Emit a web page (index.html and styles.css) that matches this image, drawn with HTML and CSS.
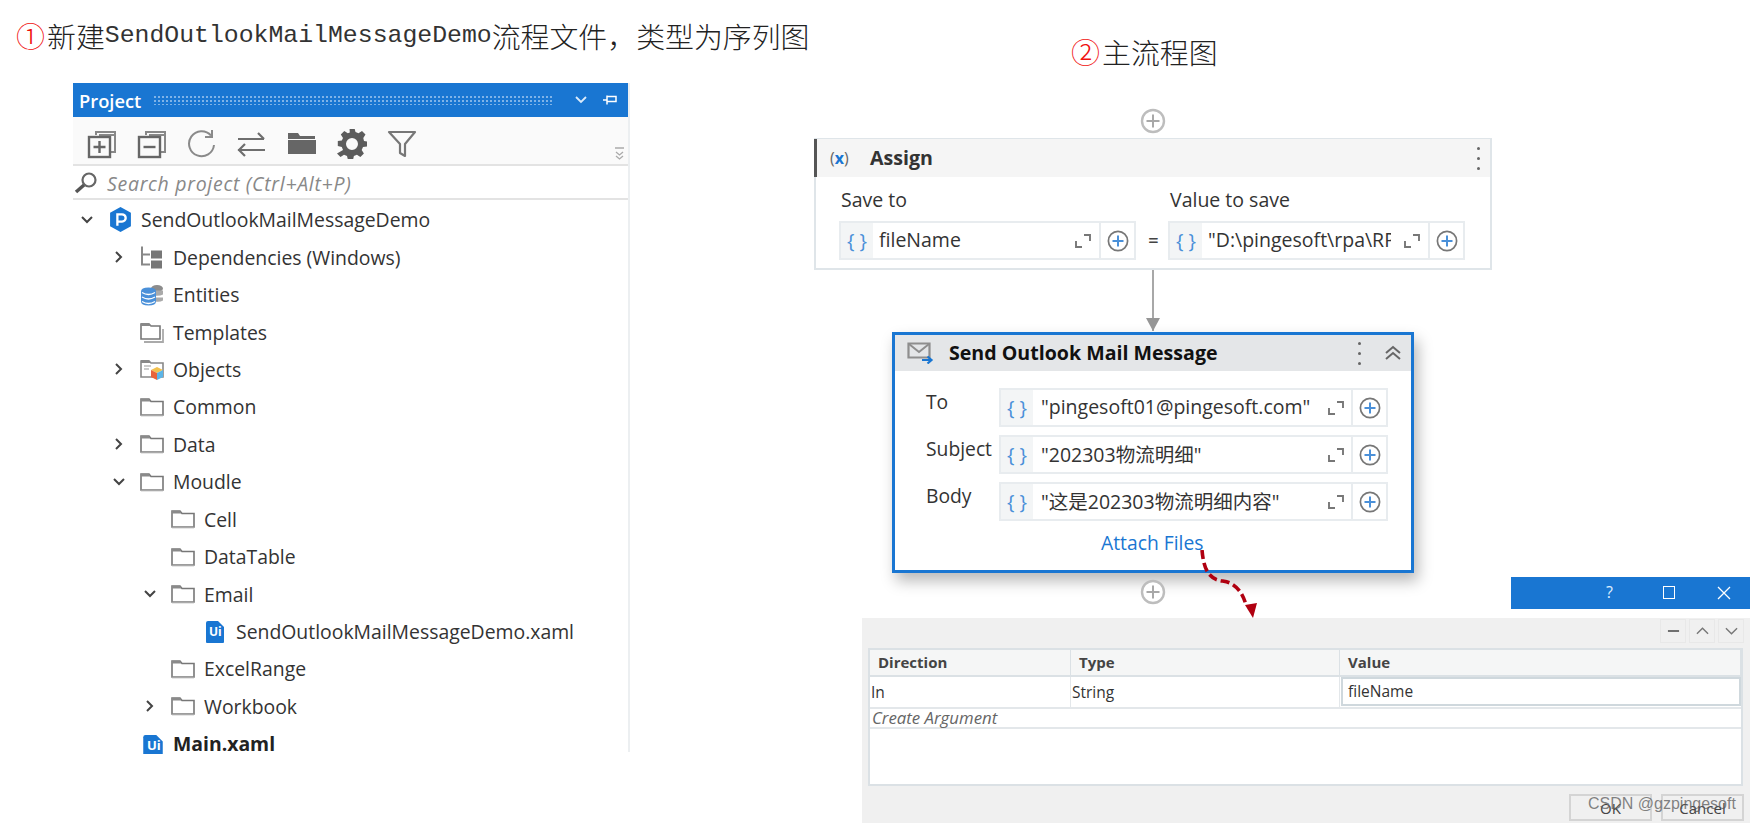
FILE: index.html
```html
<!DOCTYPE html>
<html lang="zh-CN">
<head>
<meta charset="utf-8">
<title>SendOutlookMailMessageDemo</title>
<link rel="stylesheet" href="styles.css">
</head>
<body>
<svg class="sprite" aria-hidden="true">
  <symbol id="folder" viewBox="0 0 24 20"><path d="M1 18V2h8l2 2.5h12V18z" fill="#fff" stroke="#777" stroke-width="1.6"/><path d="M1 2h8l2 2.5H1z" fill="#8a8a8a"/><path d="M1 18.5h22" stroke="#aaa" stroke-width="1.6"/></symbol>
  <symbol id="expand" viewBox="0 0 18 16"><path d="M2 8v6h6M10 2h6v6" fill="none" stroke="#777" stroke-width="1.9"/></symbol>
  <symbol id="plus" viewBox="0 0 22 22"><circle cx="11" cy="11" r="9.6" fill="#fff" stroke="#777" stroke-width="1.7"/><path d="M11 5.5v11M5.5 11h11" stroke="#4a90d9" stroke-width="2"/></symbol>
  <symbol id="addstep" viewBox="0 0 26 26"><circle cx="13" cy="13" r="11" fill="#fff" stroke="#bdbdbd" stroke-width="2.4"/><path d="M13 6.5v13M6.5 13h13" stroke="#a8a8a8" stroke-width="2"/></symbol>
  <symbol id="ui" viewBox="0 0 20 24"><path d="M1 3q0-2 2-2h10l6 6v15q0 1-1 1H2q-1 0-1-1z" fill="#1976d2"/></symbol>
</svg>

<h1 class="caption caption-one"><span class="mark">①</span><span class="zh">新建</span><span class="mono">SendOutlookMailMessageDemo</span><span class="zh">流程文件&#xFF0C;类型为序列图</span></h1>
<h2 class="caption caption-two"><span class="mark">②</span><span class="zh">主流程图</span></h2>

<section class="project">
  <header class="project-title">
    <span class="project-name">Project</span>
    <span class="grip"></span>
    <svg class="title-icon" viewBox="0 0 14 10"><path d="M2 2l5 5 5-5" fill="none" stroke="#dcebfa" stroke-width="1.8"/></svg>
    <svg class="title-icon" viewBox="0 0 16 12"><path d="M1 6h4M5 1.5v9M5 2.5h9v5H5" fill="none" stroke="#fff" stroke-width="1.5"/></svg>
  </header>
  <div class="toolbar">
    <svg class="tool" viewBox="0 0 30 30"><path d="M9 6V3h19v20h-4M13 7V6h14" fill="none" stroke="#888" stroke-width="2"/><rect x="2" y="8" width="21" height="20" fill="none" stroke="#666" stroke-width="2.4"/><path d="M12.500 12v12M6.500 18h12" stroke="#666" stroke-width="2.4"/></svg>
    <svg class="tool" viewBox="0 0 30 30"><path d="M9 6V3h19v20h-4M13 7V6h14" fill="none" stroke="#888" stroke-width="2"/><rect x="2" y="8" width="21" height="20" fill="none" stroke="#666" stroke-width="2.400"/><path d="M6.500 18h12" stroke="#666" stroke-width="2.400"/></svg>
    <svg class="tool" viewBox="0 0 30 30"><path d="M24 6.500A12.500 12.500 0 1 0 27 16" fill="none" stroke="#8a8a8a" stroke-width="2"/><path d="M25 1v7h-7" fill="none" stroke="#8a8a8a" stroke-width="2"/></svg>
    <svg class="tool" viewBox="0 0 30 30"><path d="M1 10h26M21 4l6 6M1 21h27M8 15l-6 6 6 6" fill="none" stroke="#6e6e6e" stroke-width="2.200"/></svg>
    <svg class="tool" viewBox="0 0 30 30"><path d="M1 4h10l2 3h15v3H1z" fill="#666"/><path d="M1 11h28v14H1z" fill="#666"/></svg>
    <svg class="tool" viewBox="0 0 30 30"><path fill="#5c5c5c" fill-rule="evenodd" d="M12.500 1h5l1 4 3 1.300 3.500-2.200 3.500 3.500-2.200 3.500L27 14l3 .5v5l-4 .5-1.300 3 2.200 3.500-3.500 3.500-3.500-2.200-3 1.200-.9 4h-5l-1-4-3-1.200-3.500 2.200-3.500-3.500L6 23l-1.200-3-4-.9v-5l4-.6L6 11 3.800 7.600l3.500-3.500L10.800 6.300l2-.9zM15 11a6 6 0 1 0 0 12 6 6 0 0 0 0-12z" transform="translate(0 -2)"/></svg>
    <svg class="tool" viewBox="0 0 30 30"><path d="M2 3h26L18 15v12l-5-3v-9z" fill="none" stroke="#777" stroke-width="2.200" stroke-linejoin="round"/></svg>
    <svg class="overflow" viewBox="0 0 12 14"><path d="M1 2h9M2 6l3.500 3L9 6M2 10l3.500 3L9 10" fill="none" stroke="#aaa" stroke-width="1.300"/></svg>
  </div>
  <div class="search">
    <svg class="search-icon" viewBox="0 0 24 22"><circle cx="15" cy="8" r="6.500" fill="none" stroke="#666" stroke-width="2.200"/><path d="M10 13l-8 7" stroke="#555" stroke-width="3.500"/></svg>
    <span>Search project (Ctrl+Alt+P)</span>
  </div>
  <ul class="tree">
    <li class="row l1"><svg class="chev" viewBox="0 0 14 14"><path d="M2 4l5 5 5-5"/></svg><svg class="ico-logo" viewBox="0 0 22 24"><path d="M11 0l10 5.500v13L11 24 1 18.500v-13z" fill="#1976d2"/><path d="M8 18V7h4.500a3.300 3.300 0 0 1 0 7H8" fill="none" stroke="#fff" stroke-width="2.200"/></svg><span>SendOutlookMailMessageDemo</span></li>
    <li class="row l2"><svg class="chev" viewBox="0 0 14 14"><path d="M4 2l5 5-5 5"/></svg><svg class="ico ico-tall" viewBox="0 0 24 24"><path d="M2 1v18h8M2 9h8" fill="none" stroke="#888" stroke-width="2"/><rect x="11" y="5" width="11" height="8" fill="#777"/><rect x="11" y="15" width="11" height="8" fill="#777"/></svg><span>Dependencies (Windows)</span></li>
    <li class="row l2 nochev"><svg class="ico ico-tall" viewBox="0 0 24 24"><ellipse cx="17" cy="6" rx="6" ry="3.500" fill="#8c8c8c"/><path d="M12 8h11v4q-3 2-11 1zM15 15h8v3q-3 2-8 1z" fill="#aaa"/><path d="M1 9q0-4 7.500-4T16 9v10q0 4-7.500 4T1 19z" fill="#4a90d9"/><path d="M2 10q6.500 4 13 0M2 14.500q6.500 4 13 0M2 19q6.500 4 13 0" fill="none" stroke="#fff" stroke-width="1.300"/></svg><span>Entities</span></li>
    <li class="row l2 nochev"><svg class="ico" viewBox="0 0 24 22"><path d="M1 3h8l2 2h9v13H1z" fill="#fff" stroke="#777" stroke-width="1.600"/><path d="M1 2h8l2 3H1z" fill="#888"/><path d="M4 21h19V8" fill="none" stroke="#aaa" stroke-width="1.800"/></svg><span>Templates</span></li>
    <li class="row l2"><svg class="chev" viewBox="0 0 14 14"><path d="M4 2l5 5-5 5"/></svg><svg class="ico" viewBox="0 0 24 22"><path d="M1 3h8l2 2h12v14H1z" fill="#fff" stroke="#888" stroke-width="1.600"/><path d="M1 2h8l2 3H1z" fill="#888"/><path d="M4 8h7M4 11h5" stroke="#bbb" stroke-width="1.500"/><path d="M17 9l6 3-6 3-6-3z" fill="#f2c14e"/><path d="M11 12l6 3v7l-6-3z" fill="#e8643c"/><path d="M23 12l-6 3v7l6-3z" fill="#5bb5e8"/></svg><span>Objects</span></li>
    <li class="row l2 nochev"><svg class="ico"><use href="#folder"/></svg><span>Common</span></li>
    <li class="row l2"><svg class="chev" viewBox="0 0 14 14"><path d="M4 2l5 5-5 5"/></svg><svg class="ico"><use href="#folder"/></svg><span>Data</span></li>
    <li class="row l2"><svg class="chev" viewBox="0 0 14 14"><path d="M2 4l5 5 5-5"/></svg><svg class="ico"><use href="#folder"/></svg><span>Moudle</span></li>
    <li class="row l3 nochev"><svg class="ico"><use href="#folder"/></svg><span>Cell</span></li>
    <li class="row l3 nochev"><svg class="ico"><use href="#folder"/></svg><span>DataTable</span></li>
    <li class="row l3"><svg class="chev" viewBox="0 0 14 14"><path d="M2 4l5 5 5-5"/></svg><svg class="ico"><use href="#folder"/></svg><span>Email</span></li>
    <li class="row l4 nochev"><span class="ui-file"><svg class="ui-bg"><use href="#ui"/></svg><i>Ui</i></span><span>SendOutlookMailMessageDemo.xaml</span></li>
    <li class="row l3 nochev"><svg class="ico"><use href="#folder"/></svg><span>ExcelRange</span></li>
    <li class="row l3"><svg class="chev" viewBox="0 0 14 14"><path d="M4 2l5 5-5 5"/></svg><svg class="ico"><use href="#folder"/></svg><span>Workbook</span></li>
    <li class="row l2 nochev main"><span class="ui-file"><svg class="ui-bg"><use href="#ui"/></svg><i>Ui</i></span><span>Main.xaml</span></li>
  </ul>
</section>

<main class="flow">
  <svg class="addstep"><use href="#addstep"/></svg>
  <article class="assign">
    <header class="assign-head">
      <span class="x-icon">(<b>x</b>)</span>
      <span class="assign-title">Assign</span>
      <span class="kebab"><i></i><i></i><i></i></span>
    </header>
    <div class="assign-body">
      <div class="assign-col">
        <label>Save to</label>
        <div class="field f-left"><span class="brace">{ }</span><span class="val">fileName</span><svg class="exp"><use href="#expand"/></svg><span class="add"><svg><use href="#plus"/></svg></span></div>
      </div>
      <span class="equals">=</span>
      <div class="assign-col">
        <label>Value to save</label>
        <div class="field f-right"><span class="brace">{ }</span><span class="val">"D:\pingesoft\rpa\RPA</span><svg class="exp"><use href="#expand"/></svg><span class="add"><svg><use href="#plus"/></svg></span></div>
      </div>
    </div>
  </article>
  <div class="connector"></div>
  <article class="send">
    <header class="send-head">
      <svg class="mail" viewBox="0 0 27 22"><path d="M1.500 1.500h21v14h-21z" fill="none" stroke="#8e8e8e" stroke-width="2.200"/><path d="M2 2l10 8 10-8" fill="none" stroke="#8e8e8e" stroke-width="2"/><path d="M15 18h9M20.500 14.500l4 3.500-4 3.500" fill="none" stroke="#1976d2" stroke-width="2.200"/></svg>
      <span class="send-title">Send Outlook Mail Message</span>
      <span class="kebab"><i></i><i></i><i></i></span>
      <svg class="collapse" viewBox="0 0 16 16"><path d="M1 8l7-6 7 6M1 14l7-6 7 6" fill="none" stroke="#666" stroke-width="2"/></svg>
    </header>
    <div class="send-body">
      <div class="send-row"><label>To</label><div class="field"><span class="brace">{ }</span><span class="val">"pingesoft01@pingesoft.com"</span><svg class="exp"><use href="#expand"/></svg><span class="add"><svg><use href="#plus"/></svg></span></div></div>
      <div class="send-row"><label>Subject</label><div class="field"><span class="brace">{ }</span><span class="val">"202303物流明细"</span><svg class="exp"><use href="#expand"/></svg><span class="add"><svg><use href="#plus"/></svg></span></div></div>
      <div class="send-row"><label>Body</label><div class="field"><span class="brace">{ }</span><span class="val">"这是202303物流明细内容"</span><svg class="exp"><use href="#expand"/></svg><span class="add"><svg><use href="#plus"/></svg></span></div></div>
      <a class="attach">Attach Files</a>
    </div>
  </article>
  <svg class="addstep addstep-low"><use href="#addstep"/></svg>
</main>

<div class="dialog-bar">
  <span class="bar-q">?</span>
  <span class="bar-max"></span>
  <svg class="bar-x" viewBox="0 0 14 14"><path d="M1 1l12 12M13 1L1 13" stroke="#fff" stroke-width="1.300"/></svg>
</div>
<section class="dialog">
  <div class="dialog-tools">
    <span class="tbtn"><svg viewBox="0 0 14 10"><path d="M1 5h12" stroke="#666" stroke-width="2"/></svg></span>
    <span class="tbtn"><svg viewBox="0 0 14 10"><path d="M1 8l6-6 6 6" fill="none" stroke="#777" stroke-width="1.500"/></svg></span>
    <span class="tbtn"><svg viewBox="0 0 14 10"><path d="M1 2l6 6 6-6" fill="none" stroke="#777" stroke-width="1.500"/></svg></span>
  </div>
  <div class="grid">
    <div class="grid-head"><span>Direction</span><span>Type</span><span>Value</span></div>
    <div class="grid-row"><span>In</span><span>String</span><span class="cell-edit">fileName</span></div>
    <div class="grid-create">Create Argument</div>
    <div class="grid-empty"></div>
  </div>
  <div class="dialog-actions"><button>OK</button><button>Cancel</button></div>
</section>

<svg class="red-arrow" viewBox="0 0 60 70"><path d="M2 0c1 11 3 20 8 25 6 7 13 5 20 8 8 4 13 11 16 22" fill="none" stroke="#b00010" stroke-width="3.600" stroke-dasharray="9 4"/><path d="M45 55l12-2-4 15z" fill="#b00010"/></svg>
<span class="watermark">CSDN @gzpingesoft</span>
</body>
</html>
```

FILE: styles.css
```css
* { box-sizing: border-box; }
html, body { margin: 0; padding: 0; }
body {
  position: relative;
  width: 1750px;
  height: 823px;
  overflow: hidden;
  background: #fff;
  font-family: "Open Sans", "Noto Sans CJK SC", sans-serif;
  color: #333;
}
.sprite { position: absolute; width: 0; height: 0; }

/* captions */
.caption {
  position: absolute;
  margin: 0;
  font-weight: 400;
  display: flex;
  align-items: center;
  height: 36px;
  color: #222;
  white-space: nowrap;
}
.caption-one { left: 16px; top: 17px; }
.caption-two { left: 1071px; top: 33px; }
.mark { font: 300 29px "Noto Sans CJK SC", sans-serif; color: #f01010; width: 31px; }
.zh { font: 300 28.9px "Noto Sans CJK SC", sans-serif; }
.mono { font: 400 24.8px "Liberation Mono", monospace; color: #333; }

/* project panel */
.project {
  position: absolute;
  left: 73px;
  top: 83px;
  width: 557px;
  height: 669px;
  border-right: 2px solid #eceff1;
}
.project-title {
  height: 34px;
  background: #1976d2;
  display: flex;
  align-items: center;
  padding: 0 10px 0 6px;
  color: #fff;
}
.project-name { font-size: 18.3px; font-weight: 600; }
.grip {
  flex: 1;
  height: 10px;
  margin: 0 12px 0 12px;
  background-image: radial-gradient(circle, #7fb3e8 1px, transparent 1.2px);
  background-size: 4px 4px;
}
.title-icon { width: 14px; height: 12px; margin-left: 8px; }
.title-icon:last-child { width: 16px; margin-left: 14px; }
.toolbar {
  position: relative;
  height: 49px;
  display: flex;
  align-items: center;
  gap: 20px;
  padding: 7px 0 0 14px;
  background: #fafafa;
  border-bottom: 2px solid #e3e3e3;
}
.tool { width: 30px; height: 30px; }
.overflow { position: absolute; right: 2px; bottom: 4px; width: 12px; height: 14px; }
.search {
  height: 34px;
  display: flex;
  align-items: center;
  gap: 9px;
  padding-top: 2px;
  border-bottom: 2px solid #e3e3e3;
  font-style: italic;
  font-size: 19.5px;
  letter-spacing: .7px;
  color: #888;
  white-space: nowrap;
}
.search-icon { width: 24px; height: 22px; margin-left: 1px; }
.tree { list-style: none; margin: 0; padding: 1px 0 0; }
.row {
  display: flex;
  align-items: center;
  height: 37.45px;
  font-size: 19.4px;
  color: #333;
  white-space: nowrap;
}
.l1 { padding-left: 7px; }
.l2 { padding-left: 40px; }
.l3 { padding-left: 71px; }
.l4 { padding-left: 132px; }
.chev { width: 14px; height: 14px; margin-right: 14px; margin-left: -1px; fill: none; stroke: #444; stroke-width: 2; flex: none; }
.nochev::before { content: ""; width: 27px; flex: none; }
.l4.nochev::before { width: 0; }
.l1 .chev { margin: 0 15px 0 0; }
.ico { width: 24px; height: 22px; margin-right: 9px; flex: none; }
.ico-tall { height: 25px; }
.ico-logo { width: 23px; height: 25px; margin-right: 9px; flex: none; }
.ui-file { position: relative; width: 20px; height: 24px; margin-right: 11px; flex: none; }
.ui-bg { width: 20px; height: 24px; display: block; }
.ui-file i {
  position: absolute;
  left: 4px;
  top: 5px;
  font: 700 12px/14px "Open Sans", sans-serif;
  color: #fff;
}
.row.main { height: 20px; margin-top: 9px; line-height: 20px; font-weight: 700; color: #222; }
.main.nochev::before { width: 29px; }
.main .ui-file { width: 22px; height: 20px; margin-right: 9px; overflow: hidden; }
.main .ui-bg { width: 22px; height: 26px; }
.main .ui-file i { left: 5px; top: 4px; font-size: 13px; }

/* flowchart */
.flow {
  position: absolute;
  left: 814px;
  top: 108px;
  width: 678px;
  display: flex;
  flex-direction: column;
  align-items: center;
}
.addstep { width: 26px; height: 26px; flex: none; }
.assign {
  width: 678px;
  height: 132px;
  margin-top: 4px;
  border: 2px solid #dfe5e9;
  border-top-width: 1px;
}
.assign-head {
  height: 38px;
  margin-left: -2px;
  padding: 0 10px 0 13px;
  display: flex;
  align-items: center;
  background: #f5f5f5;
  border-left: 3px solid #555;
}
.x-icon { width: 30px; font-size: 16px; color: #666; }
.x-icon b { color: #1976d2; }
.assign-title { margin-left: 10px; padding-bottom: 2px; flex: 1; font-size: 19.6px; font-weight: 700; color: #333; }
.kebab { display: flex; flex-direction: column; gap: 7px; width: 3px; }
.kebab i { width: 3px; height: 3px; background: #666; border-radius: 50%; }
.assign-body { display: flex; align-items: flex-end; padding: 0 25px 0 23px; }
.assign-col label { display: block; height: 44px; padding: 9px 0 0 2px; font-size: 19.5px; color: #333; }
.equals { width: 32px; height: 38px; padding-left: 3px; line-height: 36px; text-align: center; font-size: 18px; font-weight: 600; color: #444; }
.field {
  display: flex;
  align-items: center;
  height: 39px;
  border: 2px solid #e8ecef;
  background: #fff;
  font-size: 19.5px;
  color: #333;
  white-space: nowrap;
}
.f-left { width: 297px; }
.f-right { width: 297px; }
.brace {
  width: 32px;
  height: 100%;
  flex: none;
  display: flex;
  align-items: center;
  justify-content: center;
  background: #f3f5f6;
  color: #4a90d9;
  font-size: 20px;
}
.val { flex: 1; min-width: 0; overflow: hidden; margin: 0 12px 0 6px; padding-bottom: 2px; }
.exp { width: 18px; height: 16px; flex: none; margin-right: 7px; }
.add {
  width: 35px;
  height: 100%;
  flex: none;
  display: flex;
  align-items: center;
  justify-content: center;
  border-left: 2px solid #e8ecef;
}
.add svg { width: 22px; height: 22px; }
.connector {
  position: relative;
  width: 2px;
  height: 61px;
  background: #a8a8a8;
}
.connector::after {
  content: "";
  position: absolute;
  left: -6px;
  bottom: 0;
  border-left: 7px solid transparent;
  border-right: 7px solid transparent;
  border-top: 13px solid #969696;
}
.send {
  width: 522px;
  height: 241px;
  margin-top: 1px;
  border: 3px solid #1976d2;
  box-shadow: 4px 8px 14px rgba(0,0,0,.28);
  background: #fff;
}
.send-head {
  height: 36px;
  display: flex;
  align-items: center;
  padding: 0 10px 0 12px;
  background: #e4e6e8;
}
.mail { width: 27px; height: 22px; flex: none; }
.send-title { margin-left: 15px; padding-bottom: 2px; flex: 1; font-size: 19.6px; font-weight: 700; color: #111; }
.collapse { width: 16px; height: 16px; margin-left: 24px; }
.send-body { display: flex; flex-direction: column; padding-top: 17px; }
.send-row { display: flex; height: 47px; align-items: flex-start; padding-left: 31px; }
.send-row label { width: 73px; font-size: 19.3px; color: #333; }
.send-row .field { width: 389px; }
.send-row .val { margin: 0 10px 0 8px; }
.send-row .exp { margin-right: 6px; }
.attach {
  margin: 0 0 0 206px;
  font-size: 19.3px;
  color: #1976d2;
}
.addstep-low { margin-top: 6px; }

/* dialog */
.dialog-bar {
  position: absolute;
  left: 1511px;
  top: 577px;
  width: 239px;
  height: 32px;
  background: #1976d2;
  color: #dfeeff;
  font-size: 16px;
}
.bar-q { position: absolute; left: 95px; top: 4px; }
.bar-max { position: absolute; left: 152px; top: 9px; width: 12px; height: 13px; border: 1.500px solid #fff; }
.bar-x { position: absolute; left: 206px; top: 9px; width: 14px; height: 14px; }
.dialog {
  position: absolute;
  left: 862px;
  top: 618px;
  width: 888px;
  height: 205px;
  background: #f0f0f0;
  font-size: 15.5px;
  color: #333;
  padding: 1px 6px 0;
}
.dialog-tools { display: flex; justify-content: flex-end; gap: 3px; height: 29px; }
.tbtn { width: 26px; height: 24px; border: 1px solid #e8e8e8; display: flex; align-items: center; justify-content: center; }
.tbtn svg { width: 13px; height: 10px; }
.grid { margin-left: 0; width: 875px; border: 2px solid #dbe1e5; background: #fff; }
.grid-head {
  display: grid;
  grid-template-columns: 201px 269px 1fr;
  height: 27px;
  background: #f5f6f6;
  border-bottom: 2px solid #dbe1e5;
  font-size: 15px;
  font-weight: 700;
  line-height: 25px;
  color: #444;
}
.grid-head span { padding-left: 8px; border-right: 1px solid #dbe1e5; }
.grid-row {
  display: grid;
  grid-template-columns: 201px 269px 1fr;
  height: 32px;
  border-bottom: 2px solid #e3e7ea;
  line-height: 30px;
}
.grid-row span { padding-left: 1px; border-right: 1px solid #e3e7ea; }
.grid-row .cell-edit {
  margin: 0 0 0 1px;
  padding-left: 5px;
  height: 29px;
  line-height: 24px;
  border: 2px solid #cfd8dd;
}
.grid-create { height: 20px; line-height: 18px; padding-left: 2px; font-size: 16.8px; font-style: italic; color: #666; border-bottom: 2px solid #e3e7ea; }
.grid-empty { height: 55px; }
.dialog-actions { display: flex; justify-content: flex-end; gap: 9px; margin-top: 8px; }
.dialog-actions button {
  width: 83px;
  height: 27px;
  padding: 0;
  background: #f0f0f0;
  border: 2px solid #d4d4d4;
  font: 15px "Open Sans", sans-serif;
  color: #444;
}
.red-arrow { position: absolute; left: 1200px; top: 550px; width: 60px; height: 70px; }
.watermark {
  position: absolute;
  left: 1588px;
  top: 795px;
  font: 16px "Liberation Sans", sans-serif;
  color: rgba(90,90,90,.75);
  white-space: nowrap;
}
```
